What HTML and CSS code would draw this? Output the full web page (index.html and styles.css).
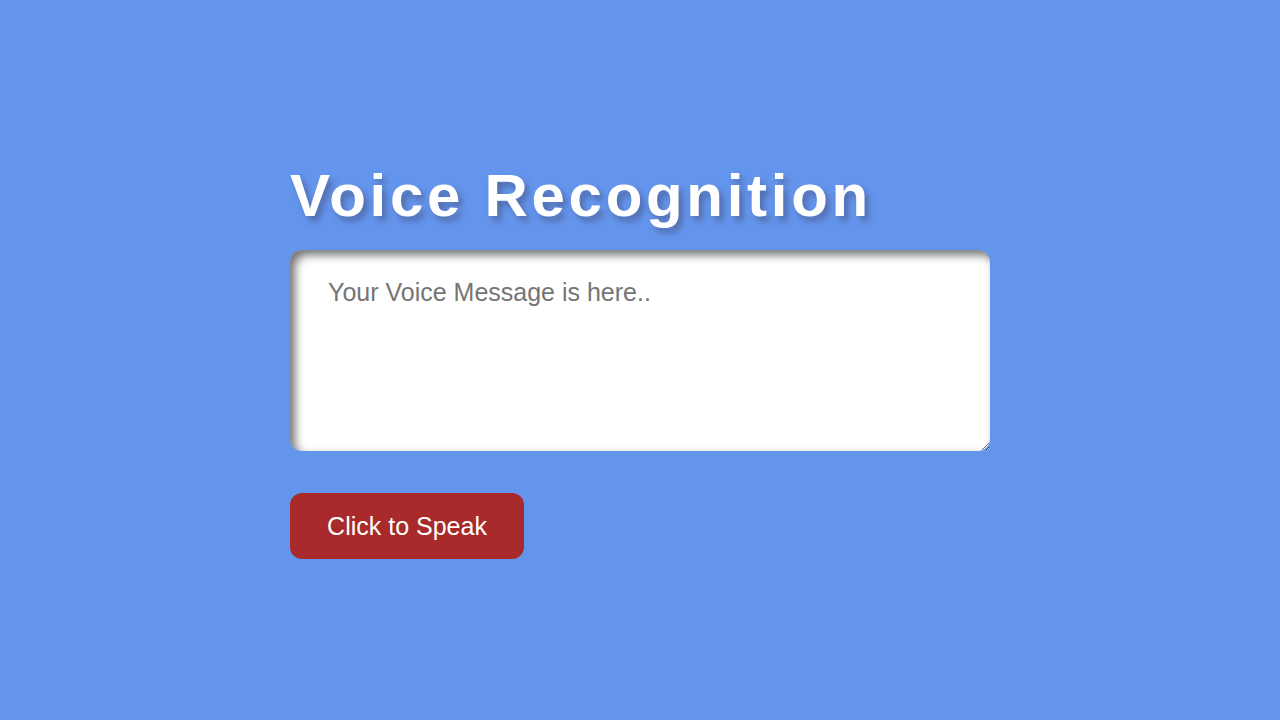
FILE: index.html
```html
<!DOCTYPE html>
<html>
<head>
<meta charset="utf-8">
<link rel="stylesheet" href="styles.css">
</head>
<body>
<main class="wrap">
  <h1 class="title">Voice Recognition</h1>
  <textarea class="message" placeholder="Your Voice Message is here.."></textarea>
  <button class="speak">Click to Speak</button>
</main>
</body>
</html>
```
FILE: styles.css
```css
html, body {
  margin: 0;
  height: 100%;
}
body {
  background: #6495ed;
  font-family: "Liberation Sans", Arial, sans-serif;
  display: flex;
  align-items: center;
  justify-content: center;
}
.wrap {
  width: 700px;
  display: flex;
  flex-direction: column;
  align-items: flex-start;
  padding-top: 2px;
}
.title {
  margin: 0 0 21px 0;
  font-size: 60px;
  line-height: 66px;
  font-weight: bold;
  letter-spacing: 3.7px;
  color: #fff;
  text-shadow: 4px 5px 6px rgba(60, 60, 90, 0.45);
}
.message {
  box-sizing: border-box;
  width: 700px;
  height: 201px;
  border: none;
  border-radius: 12px;
  padding: 28px 38px;
  font-family: "Liberation Sans", Arial, sans-serif;
  font-size: 25px;
  color: #333;
  background: #fff;
  box-shadow: inset 5px 5px 10px rgba(0, 0, 0, 0.55);
  outline: none;
}
.message::placeholder {
  color: #757575;
}
.speak {
  margin-top: 42px;
  box-sizing: border-box;
  width: 234px;
  height: 66px;
  border: none;
  border-radius: 12px;
  background: #a82a2a;
  color: #fff;
  font-family: "Liberation Sans", Arial, sans-serif;
  font-size: 25px;
  cursor: pointer;
}
```
